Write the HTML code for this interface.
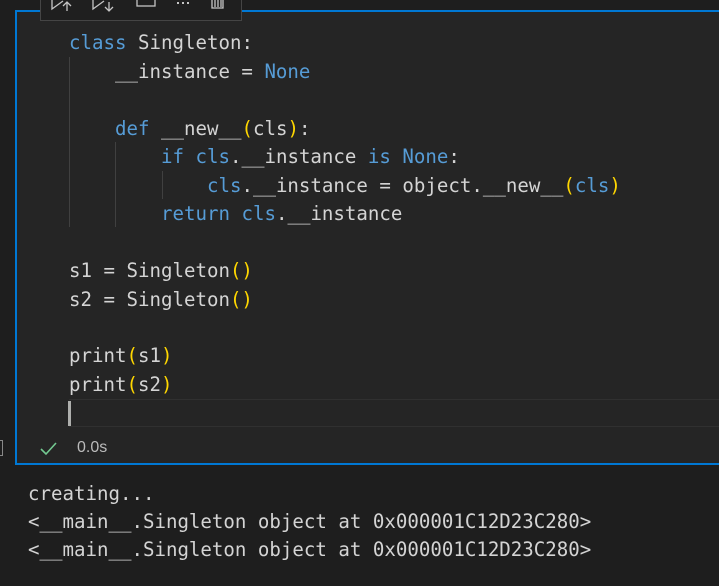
<!DOCTYPE html>
<html><head><meta charset="utf-8"><style>
html,body{margin:0;padding:0;width:719px;height:586px;overflow:hidden;background:#1e1e1e;}
.cell{position:absolute;left:15px;top:10px;width:720px;height:455px;background:#252525;border-top:2px solid #0078d4;border-left:2px solid #0078d4;border-bottom:2px solid #0078d4;box-sizing:border-box;}
.tb{position:absolute;left:40px;top:-2px;width:202px;height:23px;background:#1f1f1f;border:1px solid #454545;box-sizing:border-box;}
.code{position:absolute;left:69px;font-family:"DejaVu Sans Mono",monospace;font-size:19.1px;color:#d4d4d4;white-space:pre;}
.l{position:absolute;left:0;height:28px;line-height:28px;}
.k{color:#569cd6}.y{color:#ffd700}
.g{position:absolute;width:1px;background:#404040;}
.out{position:absolute;left:28px;font-family:"DejaVu Sans Mono",monospace;font-size:19.1px;color:#d4d4d4;white-space:pre;line-height:28px;}
</style></head><body>
<div class="cell"></div>
<div class="tb">
<svg width="202" height="22" viewBox="0 0 202 22" style="position:absolute;left:0;top:0" fill="none" stroke="#c5c5c5" stroke-width="1.3">
<path d="M11 0 L11 10 L22 2 M26 3 L26 12 M22 7 L26 3 L30 7"/>
<path d="M52 0 L52 10 L63 2 M68 3 L68 12 M64 8 L68 12 L72 8"/>
<rect x="96" y="-2" width="18" height="9"/>
<path d="M136 4 h2 M141 4 h2 M146 4 h2" stroke-width="2"/>
<path d="M171 0 v9 h11 v-9 M174 0 v8 M177 0 v8 M180 0 v8"/>
</svg></div>
<div class="g" style="left:69px;top:57px;height:170px"></div>
<div class="g" style="left:115px;top:142px;height:85px"></div>
<div class="g" style="left:162px;top:171px;height:28px"></div>
<div style="position:absolute;left:69px;top:399px;width:650px;height:28px;border-top:1px solid #303030;border-bottom:1px solid #303030;box-sizing:border-box"></div>
<div style="position:absolute;left:68px;top:401px;width:3px;height:25px;background:#aeafad"></div>
<div class="code" style="top:1px">
<div class="l" style="top:28px"><span class="k">class</span> Singleton:</div>
<div class="l" style="top:57px">    __instance = <span class="k">None</span></div>
<div class="l" style="top:114px">    <span class="k">def</span> __new__<span class="y">(</span>cls<span class="y">)</span>:</div>
<div class="l" style="top:142px">        <span class="k">if</span> <span class="k">cls</span>.__instance <span class="k">is</span> <span class="k">None</span>:</div>
<div class="l" style="top:171px">            <span class="k">cls</span>.__instance = object.__new__<span class="y">(</span><span class="k">cls</span><span class="y">)</span></div>
<div class="l" style="top:199px">        <span class="k">return</span> <span class="k">cls</span>.__instance</div>
<div class="l" style="top:256px">s1 = Singleton<span class="y">()</span></div>
<div class="l" style="top:285px">s2 = Singleton<span class="y">()</span></div>
<div class="l" style="top:341px">print<span class="y">(</span>s1<span class="y">)</span></div>
<div class="l" style="top:370px">print<span class="y">(</span>s2<span class="y">)</span></div>
</div>
<div style="position:absolute;left:-4px;top:440px;width:7px;height:16px;border:1px solid #888;box-sizing:border-box"></div>
<svg width="20" height="16" style="position:absolute;left:40px;top:441px" fill="none" stroke="#73c991" stroke-width="1.6"><path d="M1 8 L6 13 L16 2"/></svg>
<div style="position:absolute;left:77px;top:438px;font-family:'Liberation Sans',sans-serif;font-size:16px;color:#bbbbbb;line-height:20px">0.0s</div>
<div class="out" style="top:480px">creating...
&lt;__main__.Singleton object at 0x000001C12D23C280&gt;
&lt;__main__.Singleton object at 0x000001C12D23C280&gt;</div>
</body></html>
